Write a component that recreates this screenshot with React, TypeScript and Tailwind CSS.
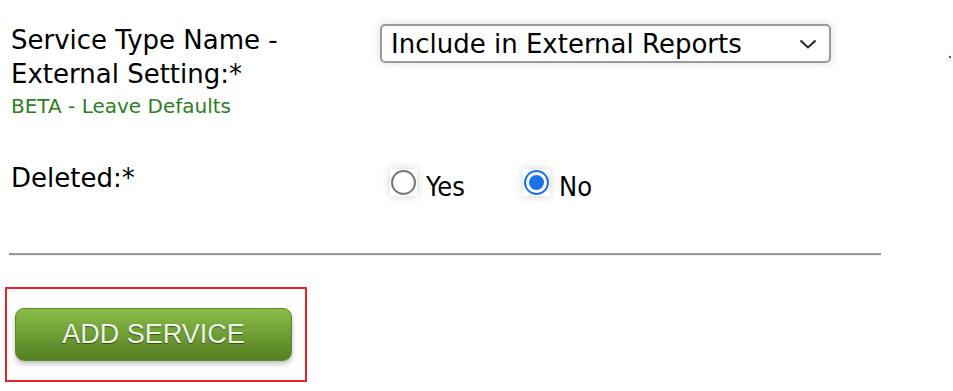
import React from "react";

export default function App() {
  const font = { fontFamily: '"DejaVu Sans", Tahoma, sans-serif' };
  const cond = { fontFamily: '"DejaVu Sans Condensed", "DejaVu Sans", Tahoma, sans-serif' };
  return (
    <div className="relative w-[953px] h-[391px] bg-white overflow-hidden text-black" style={font}>
      <div className="absolute left-[949px] top-[56px] w-[2px] h-[2px] bg-[#e02020]" />
      <div className="flex pt-[23px]">
        <div className="w-[380px] pl-[11px] shrink-0">
          <div className="text-[26px] leading-[34px]">Service Type Name -<br />External Setting:*</div>
          <div className="text-[20px] leading-[24px] text-[#2e7d1e] mt-[3px]">BETA - Leave Defaults</div>
        </div>
        <div className="mt-[1px]">
          <div className="flex items-center justify-between w-[451px] h-[39px] border-2 border-[#9a9a9a] rounded-[5px] bg-white pl-[9px] pr-[12px] shadow-[0_0_10px_rgba(0,0,0,0.15)]">
            <span className="text-[26px] leading-none">Include in External Reports</span>
            <svg width="18" height="10" viewBox="0 0 18 10" fill="none">
              <path d="M1.5 1.5 L9 8.5 L16.5 1.5" stroke="#222" strokeWidth="2" />
            </svg>
          </div>
        </div>
      </div>
      <div className="flex mt-[43px]">
        <div className="w-[380px] pl-[11px] text-[26px] leading-[34px] shrink-0">Deleted:*</div>
        <div className="flex items-start mt-[8px] pl-[10px]" style={cond}>
          <span className="w-[27px] h-[27px] bg-white shadow-[0_0_10px_rgba(0,0,0,0.18)] flex items-center justify-center">
            <span className="w-[25px] h-[25px] rounded-full border-[2px] border-[#777] bg-white" />
          </span>
          <span className="text-[27px] leading-[27px] ml-[9px] mt-[4px] w-[97px]">Yes</span>
          <span className="w-[27px] h-[27px] bg-white shadow-[0_0_10px_rgba(0,0,0,0.18)] flex items-center justify-center">
            <span className="w-[25px] h-[25px] rounded-full border-[2px] border-[#1a73e8] bg-white flex items-center justify-center">
              <span className="w-[15px] h-[15px] rounded-full bg-[#1a73e8]" />
            </span>
          </span>
          <span className="text-[27px] leading-[27px] ml-[9px] mt-[4px]">No</span>
        </div>
      </div>
      <div className="ml-[9px] w-[872px] mt-[53px] h-[2px] bg-[#999] border-b border-[#eee] box-content" />
      <div className="ml-[5px] mt-[31px] w-[302px] h-[95px] border-2 border-[#e8212b] pl-[8px] pt-[19px]">
        <button
          className="w-[277px] h-[53px] rounded-[9px] border border-[#5a8a2a] bg-gradient-to-b from-[#8abd48] to-[#557f22] text-[#eef4e8] text-[27px] shadow-[0_3px_5px_rgba(0,0,0,0.25)] [text-shadow:0_1px_1px_rgba(0,0,0,0.5)]"
          style={{ fontFamily: '"Liberation Sans", Arial, sans-serif' }}
        >
          ADD SERVICE
        </button>
      </div>
    </div>
  );
}
